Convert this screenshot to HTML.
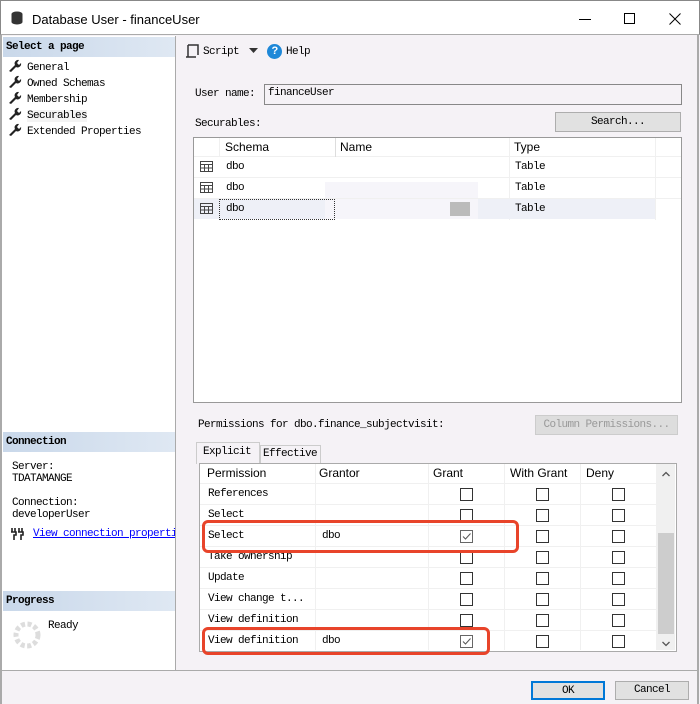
<!DOCTYPE html><html><head><style>
*{margin:0;padding:0;box-sizing:border-box}
body{width:700px;height:704px;position:relative;background:#f5f2f6;font-family:"Liberation Mono","Noto Sans CJK SC",monospace;font-size:11px;letter-spacing:-0.6px;color:#000;overflow:hidden}
.a{position:absolute}
.t{white-space:nowrap;line-height:12px}
.sans{font-family:"Liberation Sans",sans-serif;font-size:12px;letter-spacing:0}
.hdr{background:linear-gradient(90deg,#c9d8ea,#dfe8f3);font-weight:bold;padding-left:3px;line-height:20px;height:20px}
.cb{position:absolute;width:13px;height:13px;border:1px solid #333;background:#fff}
.chk{border-color:#666}
.btn{position:absolute;background:#e1e1e1;border:1px solid #adadad;text-align:center;font-size:11px}
.vl{position:absolute;width:1px;background:#f0f0f0}
.hl{position:absolute;height:1px;background:#f0f0f0}
.w{position:absolute;left:0}
</style></head><body>
<div class="a" style="left:0;top:0;width:700px;height:35px;background:#fff;border:1px solid #888;border-bottom:1px solid #aaa"></div>
<svg class="a" style="left:11px;top:11px" width="12" height="14"><ellipse cx="6" cy="3" rx="5.5" ry="2.5" fill="#333"/><rect x="0.5" y="3" width="11" height="8" fill="#333"/><ellipse cx="6" cy="11" rx="5.5" ry="2.5" fill="#333"/></svg>
<div class="a t" style="left:32px;top:12px;font-family:'Liberation Sans',sans-serif;font-size:13px;line-height:15px;letter-spacing:0">Database User - financeUser</div>
<div class="a" style="left:579px;top:19px;width:12px;height:1px;background:#000"></div>
<div class="a" style="left:624px;top:13px;width:11px;height:11px;border:1px solid #000"></div>
<svg class="a" style="left:669px;top:13px" width="12" height="12"><path d="M0.5 0.5L11.5 11.5M11.5 0.5L0.5 11.5" stroke="#000"/></svg>
<div class="a" style="left:0;top:35px;width:2px;height:669px;background:#aaa"></div>
<div class="a" style="left:697px;top:35px;width:2px;height:669px;background:#aaa"></div>
<div class="a" style="left:2px;top:36px;width:174px;height:635px;background:#fff;border-right:1px solid #aaa"></div>
<div class="a hdr t" style="left:3px;top:37px;width:172px">Select a page</div>
<div class="a" style="left:8px;top:58px;width:160px;height:90px">
<svg class="w" style="top:1px" width="14" height="80"><g fill="#222"><path id="wr" d="M1 12L7 6A3.5 3.5 0 0 1 11 1L9 4L11 6L13 4A3.5 3.5 0 0 1 8 8L3 13Z"/><use href="#wr" y="16"/><use href="#wr" y="32"/><use href="#wr" y="48"/><use href="#wr" y="64"/></g></svg>
<div class="a t" style="left:19px;top:2px;line-height:16px">General<br>Owned Schemas<br>Membership<br><span style="background:#f3f3f3">Securables</span><br>Extended Properties</div>
</div>
<div class="a hdr t" style="left:3px;top:432px;width:172px">Connection</div>
<div class="a t" style="left:12px;top:461px">Server:<br>TDATAMANGE<br><br>Connection:<br>developerUser</div>
<svg class="a" style="left:10px;top:528px" width="14" height="12"><path d="M2 0V4M5 0V4M9 0V4M12 0V4M1 4H6V7H4V12M8 4H13V7H11V12" fill="none" stroke="#222" stroke-width="1.6"/></svg>
<div class="a t" style="left:33px;top:528px;color:#00f;text-decoration:underline;width:142px;overflow:hidden">View connection properties</div>
<div class="a hdr t" style="left:3px;top:591px;width:172px">Progress</div>
<svg class="a" style="left:12px;top:620px" width="30" height="30"><circle cx="15" cy="15" r="11" fill="none" stroke="#ddd" stroke-width="5" stroke-dasharray="4 2.5"/></svg>
<div class="a t" style="left:48px;top:620px">Ready</div>
<svg class="a" style="left:185px;top:44px" width="14" height="14"><path d="M3 1H13V11M3 1V13H1M3 13H11" fill="none" stroke="#333" stroke-width="1.5"/></svg>
<div class="a t" style="left:203px;top:46px">Script</div>
<svg class="a" style="left:249px;top:48px" width="9" height="6"><path d="M0 0H9L4.5 5z" fill="#333"/></svg>
<div class="a" style="left:267px;top:44px;width:15px;height:15px;border-radius:50%;background:#1e88d8;color:#fff;font:bold 11px 'Liberation Sans';text-align:center;line-height:15px">?</div>
<div class="a t" style="left:286px;top:46px">Help</div>
<div class="a t" style="left:195px;top:88px">User name:</div>
<div class="a" style="left:264px;top:84px;width:418px;height:21px;border:1px solid #888;background:#f5f2f6"></div>
<div class="a t" style="left:268px;top:87px">financeUser</div>
<div class="a t" style="left:195px;top:118px">Securables:</div>
<div class="btn t" style="left:555px;top:112px;width:126px;height:20px;line-height:18px">Search...</div>
<div class="a" style="left:193px;top:137px;width:489px;height:266px;background:#fff;border:1px solid #999"></div>
<div class="hl" style="left:194px;top:156px;width:487px"></div>
<div class="vl" style="left:219px;top:138px;height:19px"></div>
<div class="vl" style="left:335px;top:138px;height:19px;background:#ddd"></div>
<div class="vl" style="left:509px;top:138px;height:82px"></div>
<div class="vl" style="left:655px;top:138px;height:82px"></div>
<div class="a t sans" style="left:225px;top:141px">Schema</div>
<div class="a t sans" style="left:340px;top:141px">Name</div>
<div class="a t sans" style="left:514px;top:141px">Type</div>
<div class="hl" style="left:194px;top:177px;width:487px"></div>
<div class="hl" style="left:194px;top:198px;width:487px"></div>
<div class="a" style="left:325px;top:182px;width:153px;height:16px;background:#f6f5fa"></div>
<div class="a" style="left:194px;top:199px;width:461px;height:20px;background:#eef0f7"></div>
<div class="a" style="left:325px;top:199px;width:153px;height:20px;background:#f6f5fa"></div>
<div class="a" style="left:219px;top:199px;width:116px;height:21px;border:1px dotted #333"></div>
<div class="a" style="left:450px;top:202px;width:20px;height:14px;background:#bbb"></div>
<div class="a t" style="left:226px;top:161px">dbo</div><div class="a t" style="left:515px;top:161px">Table</div>
<div class="a t" style="left:226px;top:182px">dbo</div><div class="a t" style="left:515px;top:182px">Table</div>
<div class="a t" style="left:226px;top:203px">dbo</div><div class="a t" style="left:515px;top:203px">Table</div>
<svg class="a" style="left:200px;top:160px" width="14" height="60"><g fill="none" stroke="#444"><rect x="0.5" y="1.5" width="12" height="10"/><path d="M0.5 4.5H12.5M0.5 8H12.5M4.5 4.5V11.5M8.5 4.5V11.5"/><rect x="0.5" y="22.5" width="12" height="10"/><path d="M0.5 25.5H12.5M0.5 29H12.5M4.5 25.5V32.5M8.5 25.5V32.5"/><rect x="0.5" y="43.5" width="12" height="10"/><path d="M0.5 46.5H12.5M0.5 50H12.5M4.5 46.5V53.5M8.5 46.5V53.5"/></g></svg>
<div class="a t" style="left:198px;top:419px">Permissions for dbo.finance_subjectvisit:</div>
<div class="btn t" style="left:535px;top:415px;width:143px;height:20px;line-height:18px;color:#999;background:#ddd;border-color:#ccc">Column Permissions...</div>
<div class="a" style="left:196px;top:442px;width:64px;height:22px;border:1px solid #ccc;border-bottom:none;background:#f5f2f6"></div>
<div class="a t" style="left:203px;top:446px">Explicit</div>
<div class="a" style="left:260px;top:445px;width:61px;height:19px;border:1px solid #ccc;border-bottom:none"></div>
<div class="a t" style="left:263px;top:448px">Effective</div>
<div class="a" style="left:199px;top:463px;width:478px;height:189px;background:#fff;border:1px solid #aaa"></div>
<div class="a t sans" style="left:207px;top:467px">Permission</div>
<div class="a t sans" style="left:319px;top:467px">Grantor</div>
<div class="a t sans" style="left:433px;top:467px">Grant</div>
<div class="a t sans" style="left:510px;top:467px">With Grant</div>
<div class="a t sans" style="left:586px;top:467px">Deny</div>
<div class="vl" style="left:315px;top:464px;height:186px"></div>
<div class="vl" style="left:428px;top:464px;height:186px"></div>
<div class="vl" style="left:504px;top:464px;height:186px"></div>
<div class="vl" style="left:580px;top:464px;height:186px"></div>
<div class="vl" style="left:656px;top:464px;height:186px"></div>
<div class="hl" style="left:200px;top:483px;width:456px"></div>
<div class="hl" style="left:200px;top:504px;width:456px"></div>
<div class="hl" style="left:200px;top:525px;width:456px"></div>
<div class="hl" style="left:200px;top:546px;width:456px"></div>
<div class="hl" style="left:200px;top:567px;width:456px"></div>
<div class="hl" style="left:200px;top:588px;width:456px"></div>
<div class="hl" style="left:200px;top:609px;width:456px"></div>
<div class="hl" style="left:200px;top:630px;width:456px"></div>
<div class="a t" style="left:208px;top:488px">References</div>
<div class="a t" style="left:208px;top:509px">Select</div>
<div class="a t" style="left:208px;top:530px">Select</div><div class="a t" style="left:322px;top:530px">dbo</div>
<div class="a t" style="left:208px;top:551px">Take ownership</div>
<div class="a t" style="left:208px;top:572px">Update</div>
<div class="a t" style="left:208px;top:593px">View change t...</div>
<div class="a t" style="left:208px;top:614px">View definition</div>
<div class="a t" style="left:208px;top:635px">View definition</div><div class="a t" style="left:322px;top:635px">dbo</div>
<div id="cbs"></div>
<div class="a" style="left:657px;top:464px;width:18px;height:186px;background:#f0f0f0"></div>
<div class="a" style="left:658px;top:533px;width:16px;height:101px;background:#cdcdcd"></div>
<svg class="a" style="left:662px;top:471px" width="8" height="6"><path d="M0.5 5L4 1.5L7.5 5" fill="none" stroke="#555" stroke-width="1.3"/></svg>
<svg class="a" style="left:662px;top:641px" width="8" height="6"><path d="M0.5 1L4 4.5L7.5 1" fill="none" stroke="#555" stroke-width="1.3"/></svg>
<div class="a" style="left:202px;top:520px;width:317px;height:33px;border:3px solid #e8442a;border-radius:6px"></div>
<div class="a" style="left:202px;top:627px;width:288px;height:28px;border:3px solid #e8442a;border-radius:6px"></div>
<div class="a" style="left:2px;top:670px;width:695px;height:1px;background:#aaa"></div>
<div class="btn t" style="left:531px;top:681px;width:74px;height:19px;line-height:16px;border:2px solid #0078d7">OK</div>
<div class="btn t" style="left:615px;top:681px;width:74px;height:19px;line-height:17px">Cancel</div>
<script>
var h='',ys=[487,508,529,550,571,592,613,634],xs=[460,536,612];
ys.forEach(function(y,i){xs.forEach(function(x,j){var c=(j==0&&(i==2||i==7));h+='<div class="cb'+(c?' chk':'')+'" style="left:'+x+'px;top:'+(y+1)+'px">'+(c?'<svg width="11" height="11" style="position:absolute;left:0;top:0"><path d="M2 5.5L4.5 8L9.5 2.5" fill="none" stroke="#555"/></svg>':'')+'</div>';});});
document.getElementById('cbs').innerHTML=h;
</script>
</body></html>
